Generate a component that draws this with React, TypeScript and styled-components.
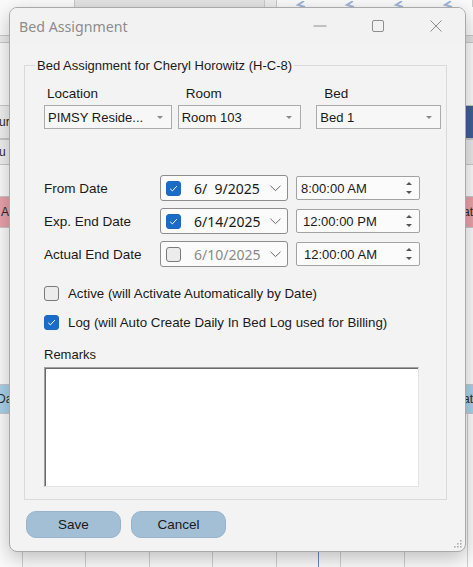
import React from "react";
import styled, { createGlobalStyle } from "styled-components";

const GlobalStyle = createGlobalStyle`
  html, body {
    margin: 0;
    padding: 0;
  }
  body {
    width: 473px;
    height: 567px;
    overflow: hidden;
    background: #fbfbfb;
    font-family: "Liberation Sans", Arial, sans-serif;
  }
`;

const Screen = styled.div`
  position: relative;
  width: 473px;
  height: 567px;
  overflow: hidden;
  background: #fbfbfb;
`;

/* ---- the app window behind the dialog ---- */

const Backdrop = styled.div`
  display: flex;
  flex-direction: column;
  height: 100%;
`;

const BgRow = styled.div<{ $h: number }>`
  height: ${(p) => p.$h}px;
  flex-shrink: 0;
  display: flex;
  justify-content: space-between;
  align-items: stretch;
`;

const BgCell = styled.div<{ $bg?: string; $shift?: number }>`
  width: 9px;
  background: ${(p) => p.$bg ?? "transparent"};
  border-top: ${(p) => (p.$bg ? "1px solid #c8c8c8" : "none")};
  border-bottom: ${(p) => (p.$bg ? "1px solid #c8c8c8" : "none")};
  box-sizing: border-box;
  overflow: hidden;
  white-space: nowrap;
  display: flex;
  align-items: center;
  font-size: 12px;
  color: #2a2a2a;
`;

const BgText = styled.span<{ $shift: number }>`
  margin-left: ${(p) => p.$shift}px;
`;

const TopStrip = styled.div`
  height: 7px;
  flex-shrink: 0;
  display: flex;
  align-items: stretch;
`;

const TopBlock = styled.div<{ $w: number; $bg?: string }>`
  width: ${(p) => p.$w}px;
  background: ${(p) => p.$bg ?? "transparent"};
  border-right: 1px solid #c9c9c9;
  display: flex;
  align-items: flex-end;
  justify-content: space-around;
`;

const GridRow = styled.div`
  flex: 1;
  display: flex;
`;

const GridCol = styled.div<{ $w: number; $blue?: boolean }>`
  width: ${(p) => p.$w}px;
  flex-shrink: 0;
  border-right: 1px solid ${(p) => (p.$blue ? "#6f86b5" : "#cfcfcf")};
`;

/* ---- dialog window ---- */

const Dialog = styled.div`
  position: absolute;
  left: 9px;
  top: 7px;
  width: 457px;
  height: 545px;
  box-sizing: border-box;
  background: #f3f3f3;
  border: 1px solid #a9a9a9;
  border-radius: 8px;
  box-shadow: 0 6px 20px rgba(0, 0, 0, 0.25);
  display: flex;
  flex-direction: column;
  overflow: hidden;
`;

const TitleBar = styled.div`
  height: 36px;
  flex-shrink: 0;
  display: flex;
  align-items: center;
  background: #f2f2f2;
`;

const Title = styled.div`
  flex: 1;
  padding-left: 9px;
  font-family: "Noto Sans", "Open Sans", sans-serif;
  font-size: 14.2px;
  color: #8c8c8c;
`;

const CaptionButton = styled.div`
  width: 58px;
  height: 100%;
  display: flex;
  align-items: center;
  justify-content: center;
  color: #8e8e8e;
`;

const Body = styled.div`
  flex: 1;
  display: flex;
  flex-direction: column;
  padding: 14px 18px 0 14px;
`;

const Group = styled.fieldset`
  margin: 0;
  padding: 0;
  border: 1px solid #dadada;
  min-width: 0;
`;

const Legend = styled.legend`
  margin-left: 10px;
  padding: 0 2px;
  font-size: 13px;
  line-height: 15px;
  color: #1a1a1a;
`;

const GroupContent = styled.div`
  padding: 13px 5px 12px 19px;
  display: flex;
  flex-direction: column;
`;

const ComboRow = styled.div`
  display: flex;
`;

const Field = styled.div<{ $w: number; $ml?: number }>`
  width: ${(p) => p.$w}px;
  margin-left: ${(p) => p.$ml ?? 0}px;
  display: flex;
  flex-direction: column;
`;

const FieldLabel = styled.div<{ $indent?: number }>`
  font-size: 13.5px;
  line-height: 16px;
  color: #1a1a1a;
  padding-left: ${(p) => p.$indent ?? 0}px;
  margin-bottom: 3px;
`;

const Combo = styled.div`
  height: 24px;
  box-sizing: border-box;
  border: 1px solid #ababab;
  background: #f7f7f7;
  display: flex;
  align-items: center;
  padding: 0 8px 0 3px;
  font-size: 13px;
  color: #1a1a1a;
`;

const ComboText = styled.span`
  flex: 1;
`;

const Caret = styled.span`
  width: 0;
  height: 0;
  border-left: 3.5px solid transparent;
  border-right: 3.5px solid transparent;
  border-top: 3.5px solid #8a8a8a;
`;

const DateGrid = styled.div`
  margin-top: 46px;
  display: grid;
  grid-template-columns: 108px 128px 124px;
  column-gap: 8px;
  row-gap: 7px;
  align-items: center;
`;

const RowLabel = styled.div`
  font-size: 13.5px;
  color: #1a1a1a;
  white-space: nowrap;
`;

const DatePicker = styled.div<{ $disabled?: boolean }>`
  height: 26px;
  box-sizing: border-box;
  border: 1px solid #8d8d8d;
  border-radius: 3px;
  background: #fbfbfb;
  display: flex;
  align-items: center;
  padding: 0 6px 0 5px;
  color: ${(p) => (p.$disabled ? "#8a8a8a" : "#1a1a1a")};
`;

const DateText = styled.span`
  flex: 1;
  margin-left: 13px;
  font-family: "Noto Sans", "Open Sans", sans-serif;
  font-size: 14px;
  white-space: pre;
`;

const TimePicker = styled.div`
  height: 24px;
  box-sizing: border-box;
  border: 1px solid #a3a3a3;
  border-radius: 2px;
  background: #fbfbfb;
  display: flex;
  align-items: center;
  padding: 0 7px 0 4px;
  font-size: 13px;
  color: #1a1a1a;
`;

const TimeText = styled.span<{ $shift?: number }>`
  flex: 1;
  margin-left: ${(p) => p.$shift ?? 0}px;
`;

const Spinner = styled.span`
  display: flex;
  flex-direction: column;
  gap: 6px;
`;

const SpinArrow = styled.span<{ $up?: boolean }>`
  width: 0;
  height: 0;
  border-left: 3px solid transparent;
  border-right: 3px solid transparent;
  ${(p) =>
    p.$up ? "border-bottom: 3.5px solid #555;" : "border-top: 3.5px solid #555;"}
`;

const Box = styled.span<{ $checked?: boolean }>`
  width: 15px;
  height: 15px;
  flex-shrink: 0;
  box-sizing: border-box;
  border-radius: 3px;
  border: 1px solid ${(p) => (p.$checked ? "#1b67c4" : "#7a7a7a")};
  background: ${(p) => (p.$checked ? "#1b6cc8" : "#ececec")};
  display: flex;
  align-items: center;
  justify-content: center;
`;

const CheckList = styled.div`
  margin-top: 19px;
  display: flex;
  flex-direction: column;
  gap: 14px;
`;

const CheckRow = styled.label`
  display: flex;
  align-items: center;
  gap: 9px;
  font-size: 13.3px;
  color: #1a1a1a;
`;

const RemarksLabel = styled.div`
  margin-top: 17px;
  font-size: 13px;
  line-height: 16px;
  color: #1a1a1a;
`;

const Remarks = styled.div`
  margin-top: 4px;
  width: 375px;
  height: 120px;
  box-sizing: border-box;
  background: #fff;
  border: 1px solid;
  border-color: #a0a0a0 #e3e3e3 #e3e3e3 #a0a0a0;
  box-shadow: inset 1px 1px 0 #6b6b6b;
`;

const ButtonBar = styled.div`
  display: flex;
  gap: 10px;
  padding: 11px 0 0 2px;
`;

const Button = styled.div`
  width: 95px;
  height: 27px;
  box-sizing: border-box;
  border: 1px solid #98b4cc;
  border-radius: 10px;
  background: #a3bfd6;
  display: flex;
  align-items: center;
  justify-content: center;
  font-size: 13.5px;
  color: #1a1a1a;
`;

const Grip = styled.svg`
  position: absolute;
  right: 3px;
  bottom: 3px;
`;

const Check: React.FC<{ checked: boolean }> = ({ checked }) => (
  <Box $checked={checked}>
    {checked && (
      <svg width="11" height="11" viewBox="0 0 11 11">
        <path d="M2.2 5.8 L4.4 7.9 L8.8 3.2" fill="none" stroke="#fff" strokeWidth="1" />
      </svg>
    )}
  </Box>
);

const Chevron = () => (
  <svg width="11" height="7" viewBox="0 0 11 7">
    <path d="M0.5 0.8 L5.5 5.6 L10.5 0.8" fill="none" stroke="#6a6a6a" strokeWidth="1" />
  </svg>
);

const dateRows = [
  { label: "From Date", date: "6/  9/2025", time: "8:00:00 AM", checked: true, shift: 0 },
  { label: "Exp. End Date", date: "6/14/2025", time: "12:00:00 PM", checked: true, shift: 2 },
  { label: "Actual End Date", date: "6/10/2025", time: "12:00:00 AM", checked: false, shift: 3 },
];

export default function App() {
  return (
    <Screen>
      <GlobalStyle />
      <Backdrop>
        <TopStrip>
          <TopBlock $w={75} />
          <TopBlock $w={190} $bg="#e4e4e4" />
          <TopBlock $w={11} $bg="#eeeeee" />
          <TopBlock $w={197}>
            {[0, 1, 2, 3].map((i) => (
              <svg key={i} width="12" height="6" viewBox="0 0 12 6">
                <path d="M9 0 L3 4 L10 6" fill="none" stroke="#9fb6d8" strokeWidth="2" />
              </svg>
            ))}
          </TopBlock>
        </TopStrip>
        <BgRow $h={28} />
        <BgRow $h={8}>
          <BgCell $bg="#ececec" />
          <BgCell $bg="#e2e2e2" />
        </BgRow>
        <BgRow $h={62} />
        <BgRow $h={34}>
          <BgCell $bg="#f0f0f0">
            <BgText $shift={-1}>ur</BgText>
          </BgCell>
          <BgCell $bg="#3f5f96" />
        </BgRow>
        <BgRow $h={26}>
          <BgCell $bg="#f0f0f0">
            <BgText $shift={-1}>u</BgText>
          </BgCell>
          <BgCell $bg="#e9e9e9" />
        </BgRow>
        <BgRow $h={31} />
        <BgRow $h={32}>
          <BgCell $bg="#e8a2aa">
            <BgText $shift={1}>A</BgText>
          </BgCell>
          <BgCell $bg="#e8a2aa">
            <BgText $shift={-1}>at</BgText>
          </BgCell>
        </BgRow>
        <BgRow $h={156} />
        <BgRow $h={30}>
          <BgCell $bg="#a9d1ea">
            <BgText $shift={-3}>Da</BgText>
          </BgCell>
          <BgCell $bg="#a9d1ea">
            <BgText $shift={-1}>at</BgText>
          </BgCell>
        </BgRow>
        <GridRow>
          {[22, 62, 63, 62, 63, 41, 21, 63, 62].map((w, i) => (
            <GridCol key={i} $w={w} $blue={i === 5} />
          ))}
        </GridRow>
      </Backdrop>

      <Dialog>
        <TitleBar>
          <Title>Bed Assignment</Title>
          <CaptionButton>
            <svg width="14" height="2" viewBox="0 0 14 2">
              <path d="M0.5 1 H13.5" stroke="currentColor" strokeWidth="1" />
            </svg>
          </CaptionButton>
          <CaptionButton>
            <svg width="12" height="12" viewBox="0 0 12 12">
              <rect x="0.5" y="0.5" width="11" height="11" rx="1.5" fill="none" stroke="currentColor" />
            </svg>
          </CaptionButton>
          <CaptionButton>
            <svg width="12" height="12" viewBox="0 0 12 12">
              <path d="M0.5 0.5 L11.5 11.5 M11.5 0.5 L0.5 11.5" stroke="currentColor" strokeWidth="1" />
            </svg>
          </CaptionButton>
        </TitleBar>

        <Body>
          <Group>
            <Legend>Bed Assignment for Cheryl Horowitz (H-C-8)</Legend>
            <GroupContent>
              <ComboRow>
                <Field $w={128}>
                  <FieldLabel $indent={3}>Location</FieldLabel>
                  <Combo>
                    <ComboText>PIMSY Reside...</ComboText>
                    <Caret />
                  </Combo>
                </Field>
                <Field $w={124} $ml={6}>
                  <FieldLabel $indent={8}>Room</FieldLabel>
                  <Combo>
                    <ComboText>Room 103</ComboText>
                    <Caret />
                  </Combo>
                </Field>
                <Field $w={125} $ml={15}>
                  <FieldLabel $indent={8}>Bed</FieldLabel>
                  <Combo>
                    <ComboText>Bed 1</ComboText>
                    <Caret />
                  </Combo>
                </Field>
              </ComboRow>

              <DateGrid>
                {dateRows.map((r) => (
                  <React.Fragment key={r.label}>
                    <RowLabel>{r.label}</RowLabel>
                    <DatePicker $disabled={!r.checked}>
                      <Check checked={r.checked} />
                      <DateText>{r.date}</DateText>
                      <Chevron />
                    </DatePicker>
                    <TimePicker>
                      <TimeText $shift={r.shift}>{r.time}</TimeText>
                      <Spinner>
                        <SpinArrow $up />
                        <SpinArrow />
                      </Spinner>
                    </TimePicker>
                  </React.Fragment>
                ))}
              </DateGrid>

              <CheckList>
                <CheckRow>
                  <Check checked={false} />
                  Active (will Activate Automatically by Date)
                </CheckRow>
                <CheckRow>
                  <Check checked={true} />
                  Log (will Auto Create Daily In Bed Log used for Billing)
                </CheckRow>
              </CheckList>

              <RemarksLabel>Remarks</RemarksLabel>
              <Remarks />
            </GroupContent>
          </Group>

          <ButtonBar>
            <Button>Save</Button>
            <Button>Cancel</Button>
          </ButtonBar>
        </Body>

        <Grip width="9" height="9" viewBox="0 0 9 9">
          {[
            [7, 1],
            [4, 4],
            [7, 4],
            [1, 7],
            [4, 7],
            [7, 7],
          ].map(([x, y], i) => (
            <rect key={i} x={x} y={y} width="1.6" height="1.6" fill="#b0b0b0" />
          ))}
        </Grip>
      </Dialog>
    </Screen>
  );
}
